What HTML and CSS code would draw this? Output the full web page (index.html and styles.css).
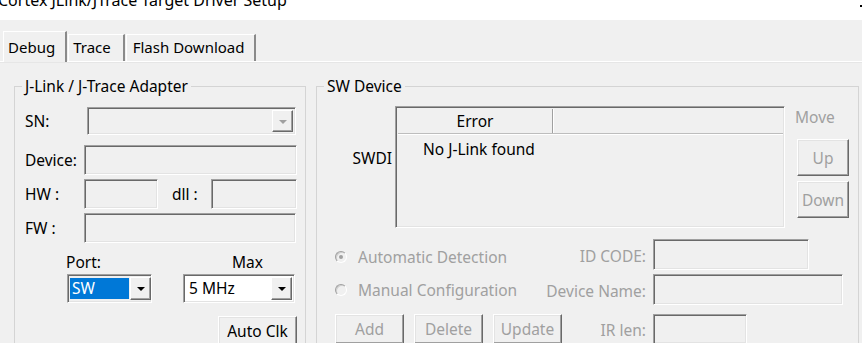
FILE: index.html
```html
<!DOCTYPE html>
<html lang="en">
<head>
    <meta charset="UTF-8">
    <title>Cortex JLink/JTrace Target Driver Setup</title>
    <link rel="stylesheet" href="styles.css">
</head>
<body>
    <div class="titlebar">
        <span class="title-text">Cortex JLink/JTrace Target Driver Setup</span>
        <span class="close-mark"></span>
    </div>
    <div class="window">
        <ul class="tabs">
            <li class="tab active">Debug</li>
            <li class="tab tab-trace">Trace</li>
            <li class="tab tab-flash">Flash Download</li>
        </ul>
        <div class="panel">
            <fieldset class="group group-adapter">
                <legend>J-Link / J-Trace Adapter</legend>
                <div class="adapter-body">
                    <div class="row row-sn">
                        <label class="lbl lbl-sn">SN:</label>
                        <div class="combo combo-sn">
                            <span class="combo-text"></span>
                            <span class="combo-btn"><i class="arrow disabled"></i></span>
                        </div>
                    </div>
                    <div class="row row-field">
                        <label class="lbl">Device:</label>
                        <div class="field w-device"></div>
                    </div>
                    <div class="row row-field row-tight">
                        <label class="lbl">HW :</label>
                        <div class="field w-hw"></div>
                        <label class="lbl lbl-dll">dll :</label>
                        <div class="field w-dll"></div>
                    </div>
                    <div class="row row-field row-tight">
                        <label class="lbl">FW :</label>
                        <div class="field w-fw"></div>
                    </div>
                    <div class="row row-caption">
                        <span class="cap-port">Port:</span>
                        <span class="cap-max">Max</span>
                    </div>
                    <div class="row row-combos">
                        <div class="combo combo-port">
                            <span class="combo-text selected">SW</span>
                            <span class="combo-btn"><i class="arrow"></i></span>
                        </div>
                        <div class="combo combo-max">
                            <span class="combo-text">5 MHz</span>
                            <span class="combo-btn"><i class="arrow"></i></span>
                        </div>
                    </div>
                    <div class="row row-autoclk">
                        <button class="btn btn-autoclk">Auto Clk</button>
                    </div>
                </div>
            </fieldset>

            <fieldset class="group group-device">
                <legend>SW Device</legend>
                <div class="device-top">
                    <div class="swd-label">SWDI</div>
                    <div class="listview">
                        <div class="list-header">
                            <span class="col-error">Error</span>
                            <span class="col-rest"></span>
                        </div>
                        <div class="list-row">No J-Link found</div>
                    </div>
                    <div class="move-col">
                        <div class="move-label">Move</div>
                        <button class="btn btn-move btn-up" disabled>Up</button>
                        <button class="btn btn-move btn-down" disabled>Down</button>
                    </div>
                </div>
                <div class="device-grid">
                    <div class="radio-line radio-first"><span class="radio checked"></span>Automatic Detection</div>
                    <div class="grid-lbl">ID CODE:</div>
                    <div class="field w-idcode"></div>

                    <div class="radio-line"><span class="radio"></span>Manual Configuration</div>
                    <div class="grid-lbl">Device Name:</div>
                    <div class="field w-devname"></div>

                    <div class="btn-row">
                        <button class="btn btn-small" disabled>Add</button>
                        <button class="btn btn-small" disabled>Delete</button>
                        <button class="btn btn-small" disabled>Update</button>
                    </div>
                    <div class="grid-lbl grid-lbl-ir">IR len:</div>
                    <div class="field w-irlen"></div>
                </div>
            </fieldset>
        </div>
    </div>
</body>
</html>
```

FILE: styles.css
```css
html, body {
    margin: 0;
    padding: 0;
    height: 343px;
    overflow: hidden;
}

body {
    font-family: "Noto Sans", "Open Sans", sans-serif;
    font-size: 15.5px;
    color: #000;
    background-color: #f0f0f0;
}

.titlebar {
    height: 20px;
    background-color: #fff;
    overflow: hidden;
    display: flex;
    justify-content: space-between;
}

.title-text {
    display: block;
    font-size: 16px;
    line-height: 20px;
    margin-top: -10px;
    margin-left: -2px;
    white-space: nowrap;
}

.close-mark {
    width: 2px;
    height: 2px;
    margin-top: 5px;
    background-color: #000;
}

/* tabs */
.tabs {
    list-style-type: none;
    margin: 0;
    padding: 12px 0 0 3px;
    height: 29px;
    display: flex;
    align-items: flex-end;
    border-bottom: 1px solid #fff;
    box-shadow: 0 1px 0 #e6e6e6;
    font-size: 15px;
}

.tab {
    height: 26px;
    line-height: 25px;
    padding: 0 12px 0 4px;
    border: 1px solid #fff;
    border-right: 2px solid #8a8a8a;
    border-bottom: none;
    margin-right: 1px;
}

.tab.active {
    height: 30px;
    line-height: 30px;
    margin-bottom: -1px;
    padding: 0 10px 0 4px;
    background-color: #f0f0f0;
}

.tab-flash {
    padding: 0 9px 0 6px;
}

/* group boxes */
.panel {
    display: flex;
    padding: 14px 0 0 14px;
    gap: 10px;
}

.group {
    margin: 0;
    padding: 0;
    min-width: 0;
    border: 1px solid #d4d4d4;
    height: 300px;
    box-sizing: border-box;
}

.group legend {
    margin-left: 7px;
    padding: 0 3px;
    line-height: 20px;
}

.group-adapter {
    width: 292px;
}

.group-device {
    width: 543px;
}

/* sunken fields */
.field,
.combo {
    box-sizing: border-box;
    border: 1px solid;
    border-color: #a0a0a0 #fff #fff #a0a0a0;
    box-shadow: inset 1px 1px 0 #696969, inset -1px -1px 0 #e3e3e3;
    background-color: #f0f0f0;
}

.adapter-body {
    padding: 11px 0 0 10px;
}

.row {
    display: flex;
    align-items: center;
}

.lbl {
    width: 59px;
    flex: none;
    white-space: nowrap;
}

.lbl-sn {
    width: 62px;
}

.row-sn {
    height: 28px;
}

.row-field {
    height: 30px;
    margin-top: 10px;
}

.row-tight {
    margin-top: 4px;
}

.field {
    height: 100%;
}

.w-device { width: 213px; }
.w-hw { width: 74px; }
.w-dll { width: 86px; }
.w-fw { width: 212px; }

.lbl-dll {
    width: 39px;
    margin-left: 14px;
}

.row-caption {
    height: 20px;
    margin-top: 8px;
    padding-top: 1px;
}

.cap-port {
    margin-left: 41px;
    width: 166px;
}

.row-combos {
    height: 29px;
    margin-top: 2px;
}

.combo {
    display: flex;
    height: 100%;
    padding: 2px;
}

.combo-sn {
    width: 209px;
}

.combo-port {
    width: 85px;
    margin-left: 42px;
}

.combo-max {
    width: 112px;
    margin-left: 31px;
    background-color: #fff;
}

.combo-text {
    flex: 1;
    line-height: 23px;
    padding-left: 3px;
    white-space: nowrap;
}

.combo-text.selected {
    flex: none;
    width: 59px;
    margin: 1px 1px 1px 0;
    padding-left: 2px;
    box-sizing: border-box;
    line-height: 21px;
    background-color: #0078d7;
    color: #fff;
}

.combo-btn {
    flex: none;
    width: 21px;
    box-sizing: border-box;
    background-color: #f0f0f0;
    border: 1px solid;
    border-color: #fff #696969 #696969 #fff;
    box-shadow: inset -1px -1px 0 #a0a0a0;
    display: flex;
    align-items: center;
    justify-content: center;
}

.arrow {
    width: 0;
    height: 0;
    border-left: 4px solid transparent;
    border-right: 4px solid transparent;
    border-top: 4px solid #000;
    margin-top: 1px;
}

.arrow.disabled {
    border-top-color: #a0a0a0;
}

/* raised buttons */
.btn {
    box-sizing: border-box;
    font-family: inherit;
    font-size: 15.5px;
    padding: 0;
    background-color: #f0f0f0;
    border: 1px solid;
    border-color: #fff #696969 #696969 #fff;
    box-shadow: inset -1px -1px 0 #a0a0a0, inset 1px 1px 0 #e3e3e3;
    color: #000;
    white-space: nowrap;
}

.btn:disabled {
    color: #a0a0a0;
}

.row-autoclk {
    margin-top: 13px;
}

.btn-autoclk {
    width: 79px;
    height: 30px;
    margin-left: 193px;
}

/* SW device group */
.device-top {
    display: flex;
    padding-top: 10px;
}

.swd-label {
    width: 75px;
    padding-right: 3px;
    text-align: right;
    line-height: 20px;
    padding-top: 42px;
    flex: none;
}

.listview {
    box-sizing: border-box;
    width: 390px;
    height: 122px;
    flex: none;
    border: 1px solid;
    border-color: #a0a0a0 #fff #fff #a0a0a0;
    box-shadow: inset 1px 1px 0 #696969, inset -1px -1px 0 #e3e3e3;
    padding: 2px 1px 0 2px;
}

.list-header {
    display: flex;
    height: 24px;
    border-bottom: 1px solid #bdbdbd;
    box-shadow: 0 1px 0 #fff;
}

.col-error {
    width: 154px;
    text-align: center;
    line-height: 24px;
    border-right: 1px solid #a0a0a0;
    box-shadow: 1px 0 0 #fff;
}

.list-row {
    padding: 5px 0 0 25px;
    line-height: 20px;
}

.move-col {
    margin-left: 10px;
    display: flex;
    flex-direction: column;
    align-items: flex-start;
}

.move-label {
    line-height: 20px;
    padding-top: 1px;
    color: #a0a0a0;
}

.btn-move {
    width: 52px;
    height: 37px;
    margin-left: 2px;
}

.btn-up {
    margin-top: 12px;
}

.btn-down {
    margin-top: 5px;
}

.device-grid {
    display: grid;
    grid-template-columns: 199px 105px 190px;
    grid-template-rows: 31px 31px 34px;
    column-gap: 7px;
    row-gap: 4px;
    margin-top: 11px;
    padding-left: 18px;
    color: #a0a0a0;
}

.radio-line {
    display: flex;
    align-items: center;
    white-space: nowrap;
}

.radio-first {
    padding-top: 4px;
}

.radio {
    box-sizing: border-box;
    flex: none;
    width: 12px;
    height: 12px;
    border-radius: 50%;
    border: 1px solid;
    border-color: #a0a0a0 #fff #fff #a0a0a0;
    box-shadow: inset 1px 1px 0 #cfcfcf;
    margin-right: 11px;
    display: flex;
    align-items: center;
    justify-content: center;
}

.radio.checked::after {
    content: "";
    width: 4px;
    height: 4px;
    border-radius: 50%;
    background-color: #a0a0a0;
}

.grid-lbl {
    text-align: right;
    white-space: nowrap;
    padding-top: 3px;
    align-self: center;
}

.grid-lbl-ir {
    align-self: end;
    padding-bottom: 2px;
}

.w-idcode { width: 156px; }
.w-devname { width: 190px; }
.w-irlen {
    width: 94px;
    height: 30px;
    margin-top: 5px;
}

.btn-row {
    display: flex;
    gap: 10px;
    margin-top: 5px;
}

.btn-small {
    flex: none;
    width: 69px;
    height: 30px;
}
```
